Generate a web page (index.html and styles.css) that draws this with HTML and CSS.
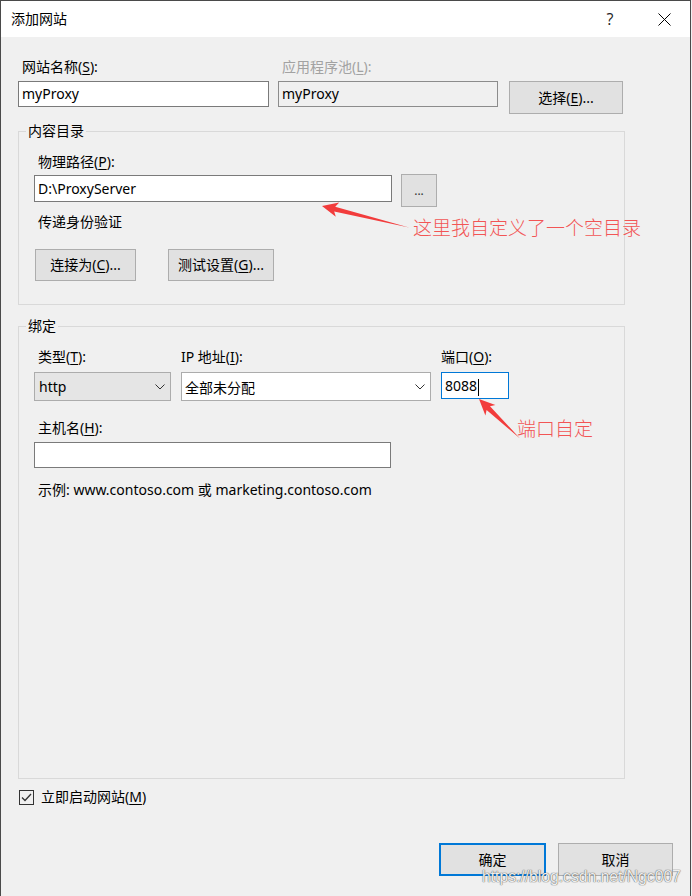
FILE: index.html
```html
<!DOCTYPE html>
<html lang="zh-CN">
<head>
<meta charset="utf-8">
<title>添加网站</title>
<link rel="stylesheet" href="styles.css">
</head>
<body>
<div class="window">
  <div class="titlebar">
    <span class="title">添加网站</span>
    <span class="cap-btn help">?</span>
    <span class="cap-btn close"><svg width="13" height="13" viewBox="0 0 13 13"><path d="M0.5 0.5 L12.5 12.5 M12.5 0.5 L0.5 12.5" stroke="#000" stroke-width="1" fill="none"/></svg></span>
  </div>
  <div class="content">
    <div class="site-row">
      <div class="lbl">网站名称(<u>S</u>):</div>
      <div class="lbl disabled">应用程序池(<u>L</u>):</div>
      <div></div>
      <div class="input">myProxy</div>
      <div class="input readonly">myProxy</div>
      <button class="btn btn-select">选择(<u>E</u>)...</button>
    </div>

    <fieldset class="group group-content">
      <legend>内容目录</legend>
      <div class="lbl">物理路径(<u>P</u>):</div>
      <div class="path-row">
        <div class="input path">D:\ProxyServer</div>
        <button class="btn btn-browse">...</button>
      </div>
      <div class="lbl auth">传递身份验证</div>
      <div class="auth-row">
        <button class="btn btn-connect">连接为(<u>C</u>)...</button>
        <button class="btn btn-test">测试设置(<u>G</u>)...</button>
      </div>
    </fieldset>

    <fieldset class="group group-binding">
      <legend>绑定</legend>
      <div class="bind-grid">
        <div class="lbl">类型(<u>T</u>):</div>
        <div class="lbl nopad">IP 地址(<u>I</u>):</div>
        <div class="lbl nopad">端口(<u>O</u>):</div>
        <div class="combo combo-type"><span>http</span><svg width="10" height="6" viewBox="0 0 10 6"><polyline points="0.5,0.5 5,5 9.5,0.5" fill="none" stroke="#333" stroke-width="1"/></svg></div>
        <div class="combo combo-ip"><span>全部未分配</span><svg width="10" height="6" viewBox="0 0 10 6"><polyline points="0.5,0.5 5,5 9.5,0.5" fill="none" stroke="#333" stroke-width="1"/></svg></div>
        <div class="input port">8088<span class="caret"></span></div>
      </div>
      <div class="lbl host-lbl">主机名(<u>H</u>):</div>
      <div class="input host"></div>
      <div class="lbl example">示例: www.contoso.com 或 marketing.contoso.com</div>
    </fieldset>

    <div class="check-row">
      <span class="checkbox"><svg width="13" height="13" viewBox="0 0 13 13"><polyline points="2,6.5 5,9.5 11,3" fill="none" stroke="#333" stroke-width="1.3"/></svg></span>
      <span class="check-text">立即启动网站(<u>M</u>)</span>
    </div>

    <div class="footer">
      <button class="btn btn-ok">确定</button>
      <button class="btn btn-cancel">取消</button>
    </div>
  </div>

  <svg class="annot" width="692" height="896" viewBox="0 0 692 896">
    <polygon points="322,206 339.2,202.6 335.2,206.8 409,227.5 334.2,211.4 335.8,216.8" fill="#f23c3c"/>
    <polygon points="479,399 495.4,405 490,406.3 520,438.5 486.6,409.9 485.4,415.4" fill="#f23c3c"/>
  </svg>
  <div class="note note-path">这里我自定义了一个空目录</div>
  <div class="note note-port">端口自定</div>
  <div class="watermark">https://blog.csdn.net/Ngc007</div>
</div>
</body>
</html>
```

FILE: styles.css
```css
* { box-sizing: border-box; }

html, body {
  margin: 0;
  padding: 0;
  background: #f0f0f0;
}

body {
  width: 692px;
  height: 896px;
  overflow: hidden;
  font-family: "Noto Sans", "Noto Sans CJK SC", sans-serif;
  font-size: 14px;
  color: #000;
}

u { text-underline-offset: 2px; }

.window {
  position: relative;
  width: 691px;
  height: 896px;
  border: 1px solid #4a4a4a;
  border-bottom: none;
  display: flex;
  flex-direction: column;
  background: #f0f0f0;
}

.titlebar {
  height: 36px;
  flex: none;
  background: #fff;
  display: flex;
  align-items: center;
  padding-left: 10px;
  padding-right: 3px;
}

.title {
  flex: 1;
  line-height: 18px;
}

.cap-btn {
  width: 46px;
  height: 36px;
  display: flex;
  align-items: center;
  justify-content: center;
}

.help {
  font-family: "Open Sans", "Noto Sans", sans-serif;
  font-size: 16px;
  line-height: 18px;
  color: #222;
}

.close { margin-left: 8px; }

.content {
  flex: 1;
  display: flex;
  flex-direction: column;
  padding: 21px 17px 20px 17px;
}

.lbl {
  line-height: 18px;
  padding-left: 4px;
  white-space: nowrap;
}

.lbl.nopad { padding-left: 0; }

.disabled { color: #a2a2a2; }

.input {
  height: 26px;
  border: 1px solid #7a7a7a;
  background: #fff;
  padding-left: 3px;
  line-height: 24px;
  white-space: nowrap;
}

.input.readonly {
  background: #f0f0f0;
  border-color: #8c8c8c;
}

.btn {
  background: #e1e1e1;
  border: 1px solid #adadad;
  font: inherit;
  color: #000;
  padding: 0;
  margin: 0;
  line-height: 18px;
}

/* first row */
.site-row {
  display: grid;
  grid-template-columns: 251px 220px 116px;
  grid-template-rows: 18px 33px;
  column-gap: 9px;
  row-gap: 5px;
  align-items: start;
}

.btn-select {
  width: 114px;
  height: 33px;
  margin-left: 2px;
}

/* groups */
.group {
  margin: 8px 0 0 0;
  width: 607px;
  min-width: 0;
  border: 1px solid #d9d9d9;
  padding: 13px 0 23px 15px;
}

.group legend {
  line-height: 18px;
  padding: 0 2px;
  margin-left: -8px;
}

.path-row {
  display: flex;
  align-items: flex-start;
  margin-top: 3px;
}

.input.path {
  width: 358px;
  height: 27px;
  margin-top: 1px;
  line-height: 25px;
}

.btn-browse {
  width: 36px;
  height: 33px;
  margin-left: 9px;
  font-size: 12px;
  line-height: 12px;
  color: #333;
}

.auth { margin-top: 6px; }

.auth-row {
  display: flex;
  margin-top: 18px;
}

.btn-connect {
  width: 101px;
  height: 32px;
  margin-left: 1px;
}

.btn-test {
  width: 106px;
  height: 32px;
  margin-left: 32px;
}

.group-binding {
  flex: 1;
  margin-top: 12px;
  padding: 13px 0 0 15px;
}

.bind-grid {
  display: grid;
  grid-template-columns: 137px 250px 68px;
  grid-template-rows: 18px 29px;
  column-gap: 10px;
  row-gap: 6px;
  align-items: start;
}

.combo {
  height: 29px;
  display: flex;
  align-items: center;
  justify-content: space-between;
  padding: 0 5px 0 4px;
  border: 1px solid #acacac;
  background: #fff;
}

.combo-type {
  background: #e5e5e5;
  padding-left: 4px;
}

.combo-ip { padding-left: 3px; }

.input.port {
  height: 27px;
  border-color: #0078d7;
  line-height: 25px;
  padding-left: 3px;
}

.caret {
  display: inline-block;
  width: 1px;
  height: 17px;
  background: #000;
  vertical-align: middle;
  margin-left: 1px;
}

.host-lbl { margin-top: 18px; }

.input.host {
  width: 357px;
  margin-top: 5px;
}

.example { margin-top: 13px; }

/* checkbox */
.check-row {
  display: flex;
  align-items: center;
  height: 18px;
  margin-top: 9px;
  flex: none;
}

.checkbox {
  width: 15px;
  height: 15px;
  border: 1px solid #333;
  display: flex;
  align-items: center;
  justify-content: center;
  margin-left: 1px;
}

.check-text {
  margin-left: 7px;
  line-height: 18px;
}

/* footer */
.footer {
  display: flex;
  justify-content: flex-end;
  margin-top: 37px;
  flex: none;
}

.btn-ok {
  width: 107px;
  height: 33px;
  border: 2px solid #0078d7;
}

.btn-cancel {
  width: 115px;
  height: 33px;
  margin-left: 12px;
}

/* annotations */
.annot {
  position: absolute;
  left: -1px;
  top: -1px;
  pointer-events: none;
}

.note {
  position: absolute;
  font-family: "Noto Sans CJK SC", sans-serif;
  font-weight: 300;
  color: #f25555;
  font-size: 19px;
  line-height: 20px;
  white-space: nowrap;
  letter-spacing: 0;
}

.note-path {
  left: 412px;
  top: 216px;
}

.note-port {
  left: 516px;
  top: 417px;
}

.watermark {
  position: absolute;
  left: 481px;
  top: 867px;
  font-family: "Liberation Sans", Arial, sans-serif;
  font-size: 15.7px;
  line-height: 18px;
  color: rgba(255, 255, 255, 0.92);
  text-shadow: 0 0 1px rgba(80, 80, 80, 0.9), 0 0 1px rgba(80, 80, 80, 0.9);
  white-space: nowrap;
}
```
